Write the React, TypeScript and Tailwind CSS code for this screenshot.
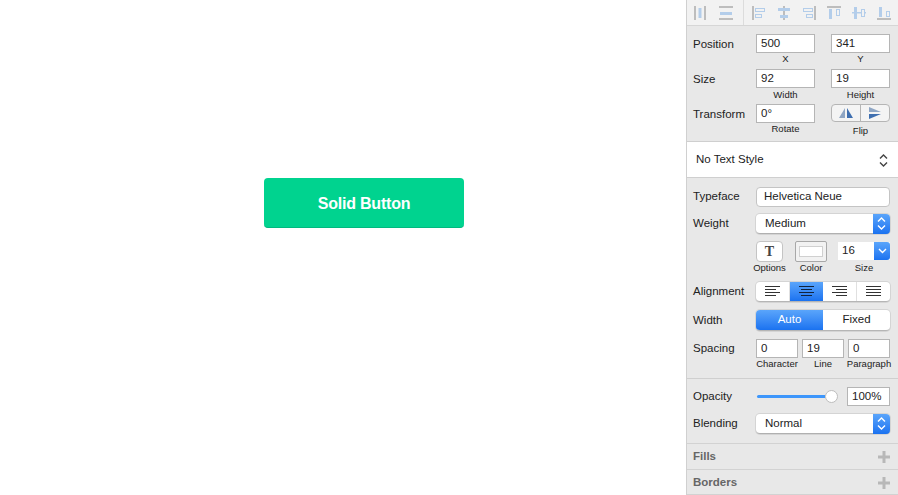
import React from 'react';

const Chevrons = ({ color = 'white' }: { color?: string }) => (
  <svg width="9" height="15" viewBox="0 0 9 15" fill="none">
    <path d="M1 5.5l3.5-3.5 3.5 3.5M1 9.5l3.5 3.5 3.5-3.5" stroke={color} strokeWidth="1.4" />
  </svg>
);

const AlignIcon = ({ lines }: { lines: number[][] }) => (
  <svg width="16" height="11" viewBox="0 0 16 11">
    {lines.map((l, i) => (
      <rect key={i} x={l[0]} y={i * 3} width={l[1]} height="1" fill="currentColor" />
    ))}
  </svg>
);

const ToolIcon = ({ children, w = 16 }: { children: React.ReactNode; w?: number }) => (
  <svg width={w} height="16" viewBox={`0 0 ${w} 16`}>
    {children}
  </svg>
);

const B = '#b3cdea';
const G = '#bdbdbd';

const Toolbar = () => (
  <div className="flex h-[26px] items-center border-b border-[#d6d6d6] bg-[#f2f2f2]">
    <div className="flex h-full w-[57px] items-center gap-[10px] border-r border-[#dcdcdc] pl-[5px]">
      <ToolIcon>
        <rect x="2" y="1" width="2" height="14" fill={G} />
        <rect x="6.500" y="3" width="3" height="10" fill={B} />
        <rect x="12" y="1" width="2" height="14" fill={G} />
      </ToolIcon>
      <ToolIcon>
        <rect x="1" y="1" width="14" height="2" fill={G} />
        <rect x="2" y="7" width="12" height="3" fill={B} />
        <rect x="1" y="13" width="14" height="2" fill={G} />
      </ToolIcon>
    </div>
    <div className="flex flex-1 items-center gap-[9px] pl-[7px]">
      <ToolIcon>
        <rect x="1" y="1" width="2" height="14" fill={G} />
        <rect x="4.500" y="3.500" width="9" height="3" fill="none" stroke={B} />
        <rect x="4.500" y="9.500" width="6" height="3" fill="none" stroke={B} />
      </ToolIcon>
      <ToolIcon>
        <rect x="7" y="1" width="2" height="14" fill={G} />
        <rect x="2" y="3" width="12" height="3" fill={B} />
        <rect x="4" y="10" width="8" height="3" fill={B} />
      </ToolIcon>
      <ToolIcon>
        <rect x="13" y="1" width="2" height="14" fill={G} />
        <rect x="2.500" y="3.500" width="9" height="3" fill="none" stroke={B} />
        <rect x="5.500" y="9.500" width="6" height="3" fill="none" stroke={B} />
      </ToolIcon>
      <ToolIcon>
        <rect x="1" y="1" width="14" height="2" fill={G} />
        <rect x="3" y="4" width="3" height="10" fill={B} />
        <rect x="10.500" y="4.500" width="3" height="6" fill="none" stroke={B} />
      </ToolIcon>
      <ToolIcon>
        <rect x="1" y="7" width="14" height="1.500" fill={B} />
        <rect x="3" y="2" width="3" height="12" fill={B} />
        <rect x="10.500" y="4.500" width="3" height="7" fill="#f2f2f2" stroke={B} />
      </ToolIcon>
      <ToolIcon>
        <rect x="1" y="13" width="14" height="2" fill={G} />
        <rect x="3" y="2" width="3" height="10" fill={B} />
        <rect x="10.500" y="6.500" width="3" height="5" fill="none" stroke={B} />
      </ToolIcon>
    </div>
  </div>
);

const Label = ({ children, className = '' }: { children: React.ReactNode; className?: string }) => (
  <div className={`w-[63px] shrink-0 text-[11.5px] leading-[19px] text-[#222] ${className}`}>{children}</div>
);

const Field = ({ value, className = '' }: { value: string; className?: string }) => (
  <div className={`flex h-[19px] items-center border border-[#b5b5b5] bg-white pl-[4px] pt-[1px] text-[11.5px] text-[#222] ${className}`}>{value}</div>
);

const Sub = ({ children, className = '' }: { children: React.ReactNode; className?: string }) => (
  <div className={`text-center text-[9.5px] leading-[11px] text-[#222] ${className}`}>{children}</div>
);

const Select = ({ value }: { value: string }) => (
  <div className="flex h-[20px] w-[134px] items-center justify-between rounded-[4px] border-b border-b-[#b0b0b0] bg-white pl-[9px] text-[11.5px] text-[#222] shadow-[0_0_0_1px_#d4d4d4]">
    {value}
    <div className="flex h-[20px] w-[17px] items-center justify-center rounded-r-[4px] bg-gradient-to-b from-[#5aa5fb] to-[#1a72f0]">
      <Chevrons />
    </div>
  </div>
);

const GeoRow = ({ label, a, b, subA, subB, h, subClass }: { label: string; a: string; b: string; subA: string; subB: string; h: string; subClass: string }) => (
  <div className={`flex ${h}`}>
    <Label className="pt-[1px]">{label}</Label>
    <div className="w-[59px]">
      <Field value={a} />
      <Sub className={subClass}>{subA}</Sub>
    </div>
    <div className="ml-[16px] w-[59px]">
      <Field value={b} />
      <Sub className={subClass}>{subB}</Sub>
    </div>
  </div>
);

const Plus = () => (
  <svg width="12" height="12" viewBox="0 0 12 12">
    <path d="M4.5 0h3v4.5H12v3H7.500V12h-3V7.500H0v-3h4.500z" fill="#b8b8b8" />
  </svg>
);

const Inspector = () => (
  <aside className="flex h-[495px] w-[212px] shrink-0 flex-col overflow-hidden border-l border-[#d0d0d0] bg-[#e8e8e8] font-['Liberation_Sans',sans-serif]">
    <Toolbar />
    <div className="pl-[6px] pt-[8px]">
      <GeoRow label="Position" a="500" b="341" subA="X" subB="Y" h="h-[35px]" subClass="mt-0" />
      <GeoRow label="Size" a="92" b="19" subA="Width" subB="Height" h="h-[35px]" subClass="mt-[1px]" />
      <div className="flex h-[37px]">
        <Label className="pt-[1px]">Transform</Label>
        <div className="w-[59px]">
          <Field value="0°" />
          <Sub>Rotate</Sub>
        </div>
        <div className="ml-[16px] w-[59px]">
          <div className="flex h-[18px] items-center rounded-[4px] border border-[#b5b5b5] bg-[#f4f4f4]">
            <div className="flex h-full flex-1 items-center justify-center border-r border-[#b5b5b5]">
              <svg width="14" height="10" viewBox="0 0 14 10">
                <path d="M6 0v10H0z" fill="#8fa6c4" />
                <path d="M8 0v10h6z" fill="#3f6fb0" />
              </svg>
            </div>
            <div className="flex h-full flex-1 items-center justify-center">
              <svg width="12" height="12" viewBox="0 0 12 12">
                <path d="M0 0l12 5H0z" fill="#8fa6c4" />
                <path d="M0 12l12-5H0z" fill="#3f6fb0" />
              </svg>
            </div>
          </div>
          <Sub className="mt-[3px]">Flip</Sub>
        </div>
      </div>
    </div>

    <div className="flex h-[37px] items-center justify-between border-y border-[#cfcfcf] bg-white pl-[9px] pr-[10px] pt-[1px] text-[11.5px] text-[#222]">
      No Text Style
      <Chevrons color="#444" />
    </div>

    <div className="pl-[6px] pt-[9px]">
      <div className="flex h-[27px]">
        <Label>Typeface</Label>
        <div className="flex h-[20px] w-[134px] items-center rounded-[4px] border border-[#c4c4c4] bg-white pl-[7px] text-[11.5px] text-[#222]">Helvetica Neue</div>
      </div>
      <div className="flex h-[27px]">
        <Label>Weight</Label>
        <Select value="Medium" />
      </div>
      <div className="ml-[63px] flex h-[41px] w-[134px]">
        <div className="w-[39px]">
          <div className="flex h-[21px] w-[27px] items-center justify-center rounded-[4px] border border-[#c4c4c4] bg-white font-['Liberation_Serif',serif] text-[14px] font-bold text-[#444]">T</div>
          <Sub className="-ml-[5px] w-[37px]">Options</Sub>
        </div>
        <div className="w-[43px]">
          <div className="flex h-[21px] w-[32px] items-center justify-center rounded-[2px] border border-[#a8a8a8] bg-[#f2f2f2]">
            <div className="h-[11px] w-[24px] border border-[#d0d0d0] bg-white" />
          </div>
          <Sub className="w-[32px]">Color</Sub>
        </div>
        <div className="w-[52px]">
          <div className="mt-[1px] flex h-[18px] items-center justify-between bg-white pl-[4px] text-[11.5px] text-[#222]">
            16
            <div className="flex h-[18px] w-[16px] items-center justify-center rounded-r-[3px] bg-gradient-to-b from-[#5aa5fb] to-[#1a72f0]">
              <svg width="9" height="6" viewBox="0 0 9 6" fill="none">
                <path d="M1 1l3.500 3.500L8 1" stroke="white" strokeWidth="1.400" />
              </svg>
            </div>
          </div>
          <Sub className="mt-[2px]">Size</Sub>
        </div>
      </div>
      <div className="flex h-[28px]">
        <Label>Alignment</Label>
        <div className="flex h-[20px] w-[134px] overflow-hidden rounded-[4px] border-b border-[#b5b5b5] bg-white text-[#333] shadow-[0_0_0_1px_#d4d4d4]">
          <div className="flex flex-1 items-center justify-center border-r border-[#e0e0e0]">
            <AlignIcon lines={[[0, 15], [0, 11], [0, 15], [0, 11]]} />
          </div>
          <div className="flex flex-1 items-center justify-center bg-gradient-to-b from-[#5aa5fb] to-[#1a72f0] text-[#12233c]">
            <AlignIcon lines={[[0, 15], [2, 11], [0, 15], [2, 11]]} />
          </div>
          <div className="flex flex-1 items-center justify-center border-r border-[#e0e0e0]">
            <AlignIcon lines={[[0, 15], [4, 11], [0, 15], [4, 11]]} />
          </div>
          <div className="flex flex-1 items-center justify-center">
            <AlignIcon lines={[[0, 15], [0, 15], [0, 15], [0, 15]]} />
          </div>
        </div>
      </div>
      <div className="flex h-[29px]">
        <Label className="pt-[1px]">Width</Label>
        <div className="flex h-[21px] w-[134px] overflow-hidden rounded-[4px] border-b border-[#b5b5b5] bg-white text-[11.5px] shadow-[0_0_0_1px_#d4d4d4]">
          <div className="flex w-[67px] items-center justify-center bg-gradient-to-b from-[#5aa5fb] to-[#1a72f0] text-white">Auto</div>
          <div className="flex flex-1 items-center justify-center text-[#222]">Fixed</div>
        </div>
      </div>
      <div className="flex h-[39px]">
        <Label>Spacing</Label>
        <div className="flex w-[134px] gap-[4px]">
          {[['0', 'Character'], ['19', 'Line'], ['0', 'Paragraph']].map(([v, l]) => (
            <div key={l} className="w-[42px]">
              <Field value={v} />
              <Sub className="-mx-[2px] whitespace-nowrap">{l}</Sub>
            </div>
          ))}
        </div>
      </div>
    </div>

    <div className="h-px bg-[#cfcfcf]" />

    <div className="pl-[6px] pt-[8px]">
      <div className="flex h-[27px] items-start">
        <Label>Opacity</Label>
        <div className="flex h-[19px] w-[91px] items-center pl-[1px]">
          <div className="h-[3px] w-[68px] rounded-l-full bg-[#3d96fb]" />
          <div className="h-[13px] w-[13px] rounded-full border border-[#bdbdbd] bg-white" />
        </div>
        <Field value="100%" className="w-[43px] pl-[4px]" />
      </div>
      <div className="flex h-[29px]">
        <Label>Blending</Label>
        <Select value="Normal" />
      </div>
    </div>

    <div className="flex h-[26px] items-center justify-between border-t border-[#d2d2d2] pl-[6px] pr-[8px] text-[11.5px] font-bold text-[#666]">
      Fills
      <Plus />
    </div>
    <div className="flex h-[26px] items-center justify-between border-y border-[#d2d2d2] pl-[6px] pr-[8px] pt-[1px] text-[11.5px] font-bold text-[#666]">
      Borders
      <Plus />
    </div>
  </aside>
);

export default function App() {
  return (
    <div className="flex h-[495px] w-[898px] overflow-hidden bg-white">
      <main className="flex-1 pl-[264px] pt-[178px]">
        <button className="flex h-[50px] w-[200px] items-center justify-center rounded-[4px] border-b border-[#00b87f] bg-[#00d38f] pt-[2px] font-['Liberation_Sans',sans-serif] text-[16px] font-bold tracking-[-0.2px] text-white">
          Solid Button
        </button>
      </main>
      <Inspector />
    </div>
  );
}
